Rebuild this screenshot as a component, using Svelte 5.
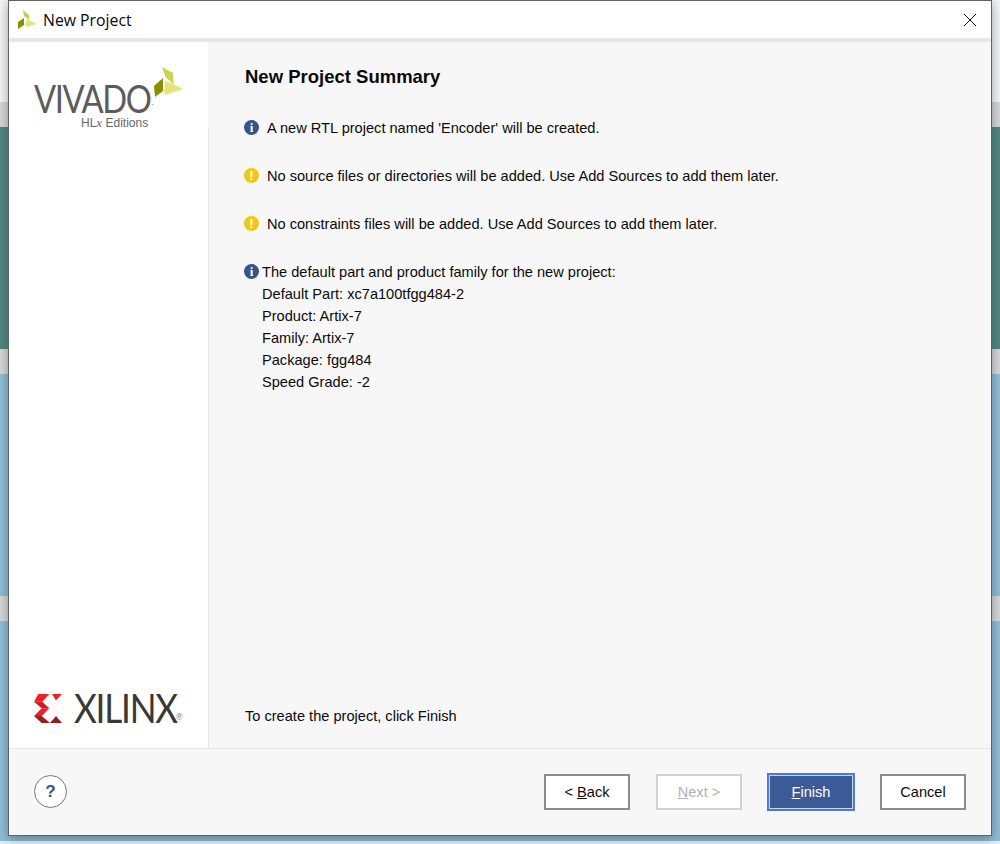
<script>
  const details = ['Default Part: xc7a100tfgg484-2', 'Product: Artix-7', 'Family: Artix-7', 'Package: fgg484', 'Speed Grade: -2'];
</script>

<div class="desktop">
  <div class="bands">
    <div class="b top"></div><div class="b gray"></div><div class="b teal"></div><div class="b gray"></div>
    <div class="b blue"></div><div class="b gray"></div><div class="b blue rest"></div><div class="b edge"></div>
  </div>
  <div class="window">
    <header class="titlebar">
      <svg class="appicon" width="20" height="20" viewBox="18 9 20 20">
        <path d="M23 9 L29 14 L29 19 L24 15 Z" fill="#c9cd45"/>
        <path d="M24 17 L18 21 L18 28 L24 24 Z" fill="#8d8d00"/>
        <path d="M27 18 L37 23 L27 26 L25 24 Z" fill="#e2e67e"/>
      </svg>
      <span class="title">New Project</span>
      <svg class="close" width="14" height="14" viewBox="0 0 14 14"><path d="M1 1 L13 13 M13 1 L1 13" stroke="#111" stroke-width="1" fill="none"/></svg>
    </header>
    <div class="main">
      <aside class="side">
        <div class="vivado">
          <span class="vword">VIVADO</span><span class="reg">.</span>
          <span class="hlx">HL<i>x</i> Editions</span>
          <svg class="vmark" width="30" height="31" viewBox="154 67 30 31">
            <path d="M162 67 L173 73 L173.5 84.5 L165.5 77 Z" fill="#cfd24f"/>
            <path d="M163 78 L154 86 L155 97 L163 91 Z" fill="#8d8d00"/>
            <path d="M165 80.5 L183.5 89 L165.5 95 L164 91 Z" fill="#e2e67e"/>
          </svg>
        </div>
        <div class="xilinx">
          <svg width="28" height="29" viewBox="0 0 28 29">
            <path d="M4.3 0 H15.3 L8.3 7.7 H0 Z" fill="#ee2024"/>
            <path d="M0 7.7 H8.3 L15.3 14.3 H7.7 Z" fill="#c52026"/>
            <path d="M7.7 14.3 H15.3 L7.7 22 H0 Z" fill="#ee2024"/>
            <path d="M0 22 H7.7 L16 29 H7.7 Z" fill="#9b1b20"/>
            <path d="M18 0 H28 L22 6.5 Z" fill="#ee2024"/>
            <path d="M22 22 L28 29 H16 Z" fill="#9b1b20"/>
          </svg>
          <span class="xword">XILINX</span><span class="r">®</span>
        </div>
      </aside>
      <section class="content">
        <h1>New Project Summary</h1>
        <ul class="msgs">
          <li><span class="ico info">i</span><span class="t">A new RTL project named 'Encoder' will be created.</span></li>
          <li><span class="ico warn">!</span><span class="t">No source files or directories will be added. Use Add Sources to add them later.</span></li>
          <li><span class="ico warn">!</span><span class="t">No constraints files will be added. Use Add Sources to add them later.</span></li>
          <li class="last">
            <span class="ico info">i</span>
            <div class="lines">
              <div>The default part and product family for the new project:</div>
              {#each details as d}<div>{d}</div>{/each}
            </div>
          </li>
        </ul>
        <p class="hint">To create the project, click Finish</p>
      </section>
    </div>
    <footer class="foot">
      <button class="help">?</button>
      <div class="btns">
        <button class="btn">&lt; <u>B</u>ack</button>
        <button class="btn dis" disabled><u>N</u>ext &gt;</button>
        <button class="btn primary"><u>F</u>inish</button>
        <button class="btn">Cancel</button>
      </div>
    </footer>
  </div>
</div>

<style>
  :global(body) { margin: 0; }
  .desktop { position: relative; width: 1000px; height: 844px; overflow: hidden; font-family: "Liberation Sans", Arial, sans-serif; }
  .bands { display: flex; flex-direction: column; height: 844px; }
  .b { flex: none; }
  .top { height: 102px; background: #f4f4f4; }
  .gray { height: 25px; background: #d6d6d6; }
  .teal { height: 222px; background: #4f8580; }
  .blue { height: 222px; background: #8fbcd4; }
  .rest { height: 220px; }
  .edge { height: 3px; background: #e6eef2; }
  .window {
    position: absolute; left: 8px; top: 0; width: 984px; height: 836px;
    box-sizing: border-box; border: 1px solid #5f6366; background: #f7f7f7;
    display: flex; flex-direction: column; box-shadow: 0 3px 10px rgba(40,60,70,.45);
  }
  .titlebar { height: 37px; background: #fff; display: flex; align-items: center; padding: 0 14px 0 9px; flex: none; border-bottom: 4px solid #e6e6e6; }
  .appicon { margin-right: 5px; }
  .title { font: 15.8px "Open Sans", "Noto Sans", sans-serif; color: #0a0a0a; flex: 1; }
  .main { flex: 1; display: flex; min-height: 0; border-bottom: 1px solid #e4e4e4; }
  .side { width: 174px; background: #fff; display: flex; flex-direction: column; justify-content: space-between; padding-left: 25px; position: relative; }
  .side::after { content: ""; position: absolute; right: -1px; top: 85px; bottom: 0; width: 1px; background: #e6e6e6; }
  .vivado { position: relative; margin-top: 38px; height: 58px; color: #5c5c5c; }
  .vword { display: block; width: max-content; font: 400 38px/36px Lato, "Open Sans", sans-serif; letter-spacing: -1.6px; transform: scaleX(.86); transform-origin: left; }
  .reg { position: absolute; left: 117px; top: 17px; font-size: 9px; color: #666; }
  .hlx { position: absolute; left: 47px; top: 36px; font-size: 12px; line-height: 13px; color: #666; }
  .hlx i { font: italic 13px/13px "Liberation Serif", serif; }
  .vmark { position: absolute; left: 120px; top: -13px; }
  .xilinx { display: flex; align-items: center; gap: 12px; margin-bottom: 25px; position: relative; }
  .xword { font: 400 40px/29px Lato, "Open Sans", sans-serif; color: #3b3835; letter-spacing: -1.4px; transform: scaleX(.88); transform-origin: left; }
  .r { position: absolute; left: 142px; bottom: 0; font-size: 9px; line-height: 11px; color: #777; }
  .content { flex: 1; padding: 24px 0 0 36px; display: flex; flex-direction: column; }
  h1 { margin: 0 0 0 1px; font: bold 18.5px/22px "Liberation Sans", sans-serif; color: #0a0a0a; }
  .msgs { list-style: none; margin: 29px 0 0; padding: 0; flex: 1; font-size: 14.6px; color: #0a0a0a; }
  .msgs li { display: flex; align-items: flex-start; height: 48px; line-height: 22px; }
  .msgs .last { height: auto; }
  .ico { flex: none; width: 15px; height: 15px; border-radius: 50%; color: #fff; font: bold 13px/15px "Liberation Serif", serif; text-align: center; margin-top: 3px; }
  .info { background: #34548a; }
  .warn { background: #f0c814; font-family: "Liberation Sans", sans-serif; }
  .t { margin-left: 8px; }
  .lines { margin-left: 3px; }
  .hint { margin: 0 0 21px 1px; font-size: 14.6px; line-height: 22px; color: #0a0a0a; }
  .foot { height: 86px; flex: none; display: flex; align-items: center; justify-content: space-between; padding: 0 25px 0 25px; }
  .help { width: 33px; height: 33px; border-radius: 50%; border: 1px solid #777; background: #fff; color: #34548a; font: bold 17px "Liberation Sans", sans-serif; padding: 0; margin-top: -1px; }
  .btns { display: flex; gap: 26px; }
  .btn { width: 86px; height: 36px; box-sizing: border-box; border: 2px solid #8c8c8c; background: #fff; font: 14.6px "Liberation Sans", sans-serif; color: #0a0a0a; padding: 0; }
  .dis { border-color: #d2d2d2; color: #b0b0b0; }
  .primary { width: 88px; height: 38px; margin: -1px; background: #3c5a96; color: #fff; border: 2px solid #4c7bd0; box-shadow: inset 0 0 0 1px #c6d3ee; }
</style>
